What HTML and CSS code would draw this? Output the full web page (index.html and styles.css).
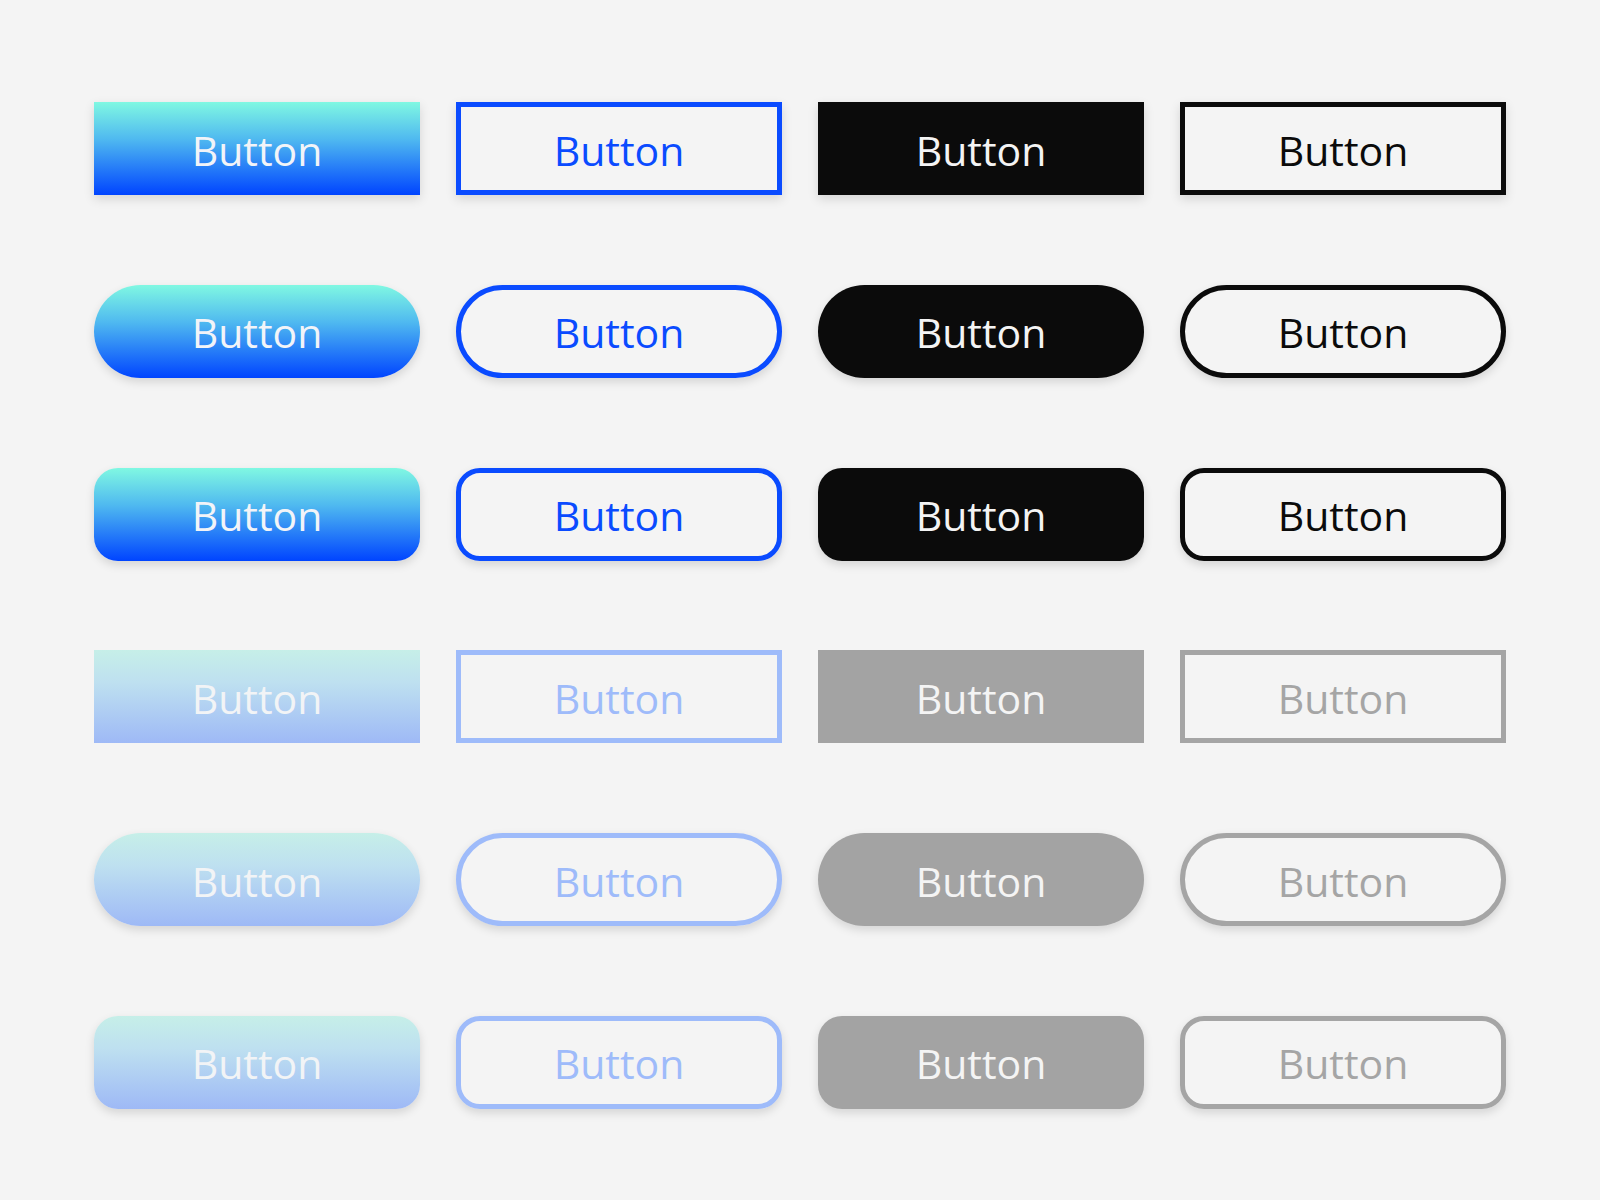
FILE: index.html
```html
<!DOCTYPE html>
<html>
<head>
<meta charset="utf-8">
<link rel="stylesheet" href="styles.css">
</head>
<body>
<div class="grid">
  <div class="btn grad">Button</div>
  <div class="btn out-blue">Button</div>
  <div class="btn solid-black">Button</div>
  <div class="btn out-black">Button</div>

  <div class="btn grad pill">Button</div>
  <div class="btn out-blue pill">Button</div>
  <div class="btn solid-black pill">Button</div>
  <div class="btn out-black pill">Button</div>

  <div class="btn grad round">Button</div>
  <div class="btn out-blue round">Button</div>
  <div class="btn solid-black round">Button</div>
  <div class="btn out-black round">Button</div>

  <div class="btn grad-dis flat">Button</div>
  <div class="btn out-blue-dis flat">Button</div>
  <div class="btn solid-gray flat">Button</div>
  <div class="btn out-gray flat">Button</div>

  <div class="btn grad-dis pill">Button</div>
  <div class="btn out-blue-dis pill">Button</div>
  <div class="btn solid-gray pill">Button</div>
  <div class="btn out-gray pill">Button</div>

  <div class="btn grad-dis round">Button</div>
  <div class="btn out-blue-dis round">Button</div>
  <div class="btn solid-gray round">Button</div>
  <div class="btn out-gray round">Button</div>
</div>
</body>
</html>
```
FILE: styles.css
```css
html, body {
  margin: 0;
  padding: 0;
  background: #f4f4f4;
  width: 1600px;
  height: 1200px;
  overflow: hidden;
}
.grid {
  display: grid;
  grid-template-columns: repeat(4, 326px);
  grid-auto-rows: 93px;
  column-gap: 36px;
  row-gap: 89.8px;
  padding: 102px 0 0 94px;
}
.btn {
  box-sizing: border-box;
  display: flex;
  align-items: center;
  justify-content: center;
  font-family: "Open Sans", "Noto Sans", sans-serif;
  font-size: 41px;
  letter-spacing: 0;
  padding-top: 2px;
  box-shadow: 0 4px 10px rgba(0,0,0,0.13);
}
.flat { box-shadow: none; }
.pill { border-radius: 47px; }
.round { border-radius: 24px; }
.grad {
  background: linear-gradient(to bottom, #80f8e2 0%, #4fb9f0 40%, #0044ff 100%);
  color: #f2f4f8;
}
.out-blue {
  border: 5px solid #0a4bff;
  color: #0a4bff;
}
.solid-black {
  background: #0b0b0b;
  color: #f4f4f4;
}
.out-black {
  border: 5px solid #0b0b0b;
  color: #0b0b0b;
}
.grad-dis {
  background: linear-gradient(to bottom, #c6efe8 0%, #bee0f0 35%, #9eb9f6 100%);
  color: #f2f4f6;
}
.out-blue-dis {
  border: 5px solid #9ebbfa;
  color: #9ebbfa;
}
.solid-gray {
  background: #a3a3a3;
  color: #f4f4f4;
}
.out-gray {
  border: 5px solid #a5a5a5;
  color: #a5a5a5;
}
```
